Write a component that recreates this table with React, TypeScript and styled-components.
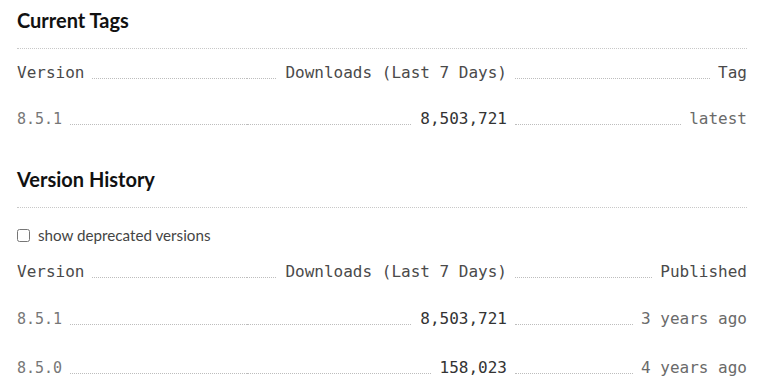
import React from "react";
import styled, { createGlobalStyle } from "styled-components";

const Global = createGlobalStyle`
  html, body { margin: 0; padding: 0; background: #fff; }
  body { font-family: "Lato", "Noto Sans", sans-serif; color: #111; }
`;

const Page = styled.div`
  width: 730px;
  padding: 0 25px 0 17px;
`;

const Heading = styled.h2<{ $top?: number }>`
  margin: ${(p) => p.$top ?? 0}px 0 0;
  padding: 5px 0 13px;
  font-family: "Lato", "Noto Sans", sans-serif;
  font-size: 20px;
  font-weight: 700;
  line-height: 30px;
  color: #111;
  border-bottom: 1px dotted #c8c8c8;
`;

const Table = styled.div<{ $top?: number }>`
  margin-top: ${(p) => p.$top ?? 0}px;
  display: flex;
  flex-direction: column;
`;

const Row = styled.div<{ $pt: number; $pb: number }>`
  display: grid;
  grid-template-columns: 1fr 260px 240px;
  padding: ${(p) => p.$pt}px 0 ${(p) => p.$pb}px;
  font-family: "DejaVu Sans Mono", "Liberation Mono", monospace;
  font-size: 16px;
  line-height: 24px;
`;

const Cell = styled.div`
  display: flex;
  align-items: baseline;
  white-space: nowrap;
`;

const Fill = styled.span<{ $l?: number; $r?: number }>`
  flex: 1;
  height: 0;
  margin-left: ${(p) => p.$l ?? 0}px;
  margin-right: ${(p) => p.$r ?? 0}px;
  border-bottom: 1px dotted #bdbdbd;
  transform: translateY(1px);
`;

const Text = styled.span<{ $c: string; $size?: number }>`
  color: ${(p) => p.$c};
  font-size: ${(p) => p.$size ?? 16}px;
`;

const CheckRow = styled.label`
  display: flex;
  align-items: center;
  margin-top: 17px;
  font-family: "Lato", "Noto Sans", sans-serif;
  font-size: 15.2px;
  line-height: 20px;
  color: #444;
`;

const Check = styled.input`
  margin: 0 8px 0 0;
  width: 13px;
  height: 13px;
`;

type RowData = [string, string, string];

const TagTable = ({
  head,
  rows,
  top,
  pads,
}: {
  head: RowData;
  rows: RowData[];
  top?: number;
  pads: [number, number][];
}) => (
  <Table $top={top}>
    <Row $pt={pads[0][0]} $pb={pads[0][1]}>
      <Cell>
        <Text $c="#4a4a4a">{head[0]}</Text>
        <Fill $l={8} />
      </Cell>
      <Cell>
        <Fill $r={9} />
        <Text $c="#4a4a4a">{head[1]}</Text>
      </Cell>
      <Cell>
        <Fill $l={8} $r={8} />
        <Text $c="#4a4a4a">{head[2]}</Text>
      </Cell>
    </Row>
    {rows.map((r, i) => (
      <Row key={r[0]} $pt={pads[i + 1][0]} $pb={pads[i + 1][1]}>
        <Cell>
          <Text $c="#777" $size={15}>
            {r[0]}
          </Text>
          <Fill $l={8} />
        </Cell>
        <Cell>
          <Fill $r={9} />
          <Text $c="#333">{r[1]}</Text>
        </Cell>
        <Cell>
          <Fill $l={8} $r={8} />
          <Text $c="#6a6a6a">{r[2]}</Text>
        </Cell>
      </Row>
    ))}
  </Table>
);

export default function App() {
  return (
    <Page>
      <Global />
      <Heading>Current Tags</Heading>
      <TagTable
        top={2}
        pads={[
          [10, 12],
          [10, 10],
        ]}
        head={["Version", "Downloads (Last 7 Days)", "Tag"]}
        rows={[["8.5.1", "8,503,721", "latest"]]}
      />
      <Heading $top={18}>Version History</Heading>
      <CheckRow>
        <Check type="checkbox" />
        show deprecated versions
      </CheckRow>
      <TagTable
        top={5}
        pads={[
          [10, 12],
          [11, 14],
          [11, 10],
        ]}
        head={["Version", "Downloads (Last 7 Days)", "Published"]}
        rows={[
          ["8.5.1", "8,503,721", "3 years ago"],
          ["8.5.0", "158,023", "4 years ago"],
        ]}
      />
    </Page>
  );
}
